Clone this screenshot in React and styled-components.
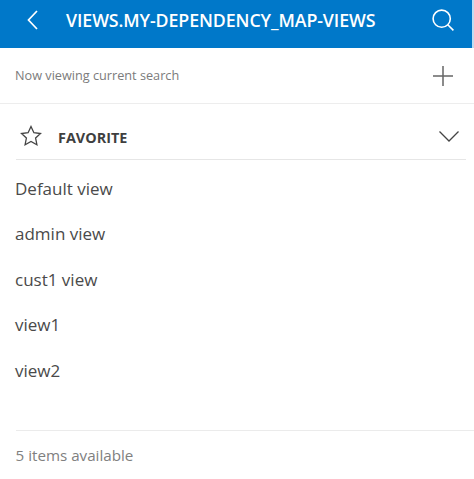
import React from "react";
import styled, { createGlobalStyle } from "styled-components";

const GlobalStyle = createGlobalStyle`
    html, body {
        margin: 0;
        padding: 0;
        background: #FFFFFF;
    }
`;

const Page = styled("div")`
    width: 474px;
    height: 479px;
    display: flex;
    flex-direction: column;
    overflow: hidden;
    font-family: "Open Sans", sans-serif;
    background: #FFFFFF;
`;

const Header = styled("header")`
    height: 48px;
    flex: none;
    display: flex;
    align-items: center;
    padding: 0 18px 8px 27px;
    background: #0078C9;
    color: #FFFFFF;
    border-right: 2px solid #BFDDF2;
    box-sizing: border-box;
`;

const Title = styled("h1")`
    flex: 1;
    margin: 0 0 0 28px;
    font-size: 17.8px;
    font-weight: 600;
    letter-spacing: -0.1px;
`;

const CurrentRow = styled("div")`
    height: 55px;
    flex: none;
    display: flex;
    align-items: center;
    justify-content: space-between;
    padding: 0 21px 0 15px;
    border-bottom: 1px solid #EDEDED;
`;

const CurrentText = styled("span")`
    font-size: 12.7px;
    margin-bottom: 1px;
    color: #7B7B7B;
`;

const SectionRow = styled("div")`
    height: 45px;
    flex: none;
    display: flex;
    align-items: center;
    margin: 0 8px 0 16px;
    padding: 10px 7px 0 4px;
    border-bottom: 1px solid #E6E6E6;
`;

const SectionTitle = styled("span")`
    flex: 1;
    margin: 1px 0 0 16px;
    font-size: 14.4px;
    font-weight: 700;
    color: #3F3F3F;
`;

const StarIcon = styled("svg")`
    flex: none;
    display: block;
    margin-bottom: 3px;
    fill: none;
    stroke: #444444;
    stroke-width: 1.3;
`;

const List = styled("ul")`
    flex: 1;
    margin: 0;
    padding: 5.5px 0 0 15px;
    list-style: none;
`;

const ListItem = styled("li")`
    height: 45.5px;
    line-height: 45.5px;
    font-size: 17px;
    color: #4A4A4A;
`;

const Footer = styled("footer")`
    height: 48px;
    flex: none;
    display: flex;
    align-items: center;
    margin-left: 15.5px;
    border-top: 1px solid #EBEBEB;
    font-size: 15.2px;
    color: #808080;
`;

const Icon = styled("svg")`
    flex: none;
    display: block;
    fill: none;
    stroke: ${(props) => props.$color};
    stroke-width: ${(props) => props.$weight || 1.5};
`;

const views = ["Default view", "admin view", "cust1 view", "view1", "view2"];

export default function App() {
    return (
        <Page>
            <GlobalStyle />
            <Header>
                <Icon width="11" height="20" viewBox="0 0 11 20" $color="#FFFFFF" $weight={1.7}>
                    <path d="M10 1 1.5 10l8.5 9" />
                </Icon>
                <Title>VIEWS.MY-DEPENDENCY_MAP-VIEWS</Title>
                <Icon width="22" height="22" viewBox="0 0 22 22" $color="#FFFFFF" $weight={1.6}>
                    <circle cx="9.7" cy="9.7" r="8.6" />
                    <path d="m15.8 15.8 5.6 5.6" />
                </Icon>
            </Header>
            <CurrentRow>
                <CurrentText>Now viewing current search</CurrentText>
                <Icon width="20" height="20" viewBox="0 0 20 20" $color="#666666">
                    <path d="M10 0v20M0 10h20" />
                </Icon>
            </CurrentRow>
            <SectionRow>
                <StarIcon width="22" height="21" viewBox="0 0 22 21">
                    <path d="m11 1.5 2.9 6.2 6.6.8-4.9 4.6 1.3 6.6-5.9-3.3-5.9 3.3 1.3-6.6L1.5 8.5l6.6-.8z" />
                </StarIcon>
                <SectionTitle>FAVORITE</SectionTitle>
                <Icon width="20" height="11" viewBox="0 0 20 11" $color="#444444" $weight={1.3}>
                    <path d="m.5 .5 9.5 9.5L19.5 .5" />
                </Icon>
            </SectionRow>
            <List>
                {views.map((view) => (
                    <ListItem key={view}>{view}</ListItem>
                ))}
            </List>
            <Footer>5 items available</Footer>
        </Page>
    );
}
